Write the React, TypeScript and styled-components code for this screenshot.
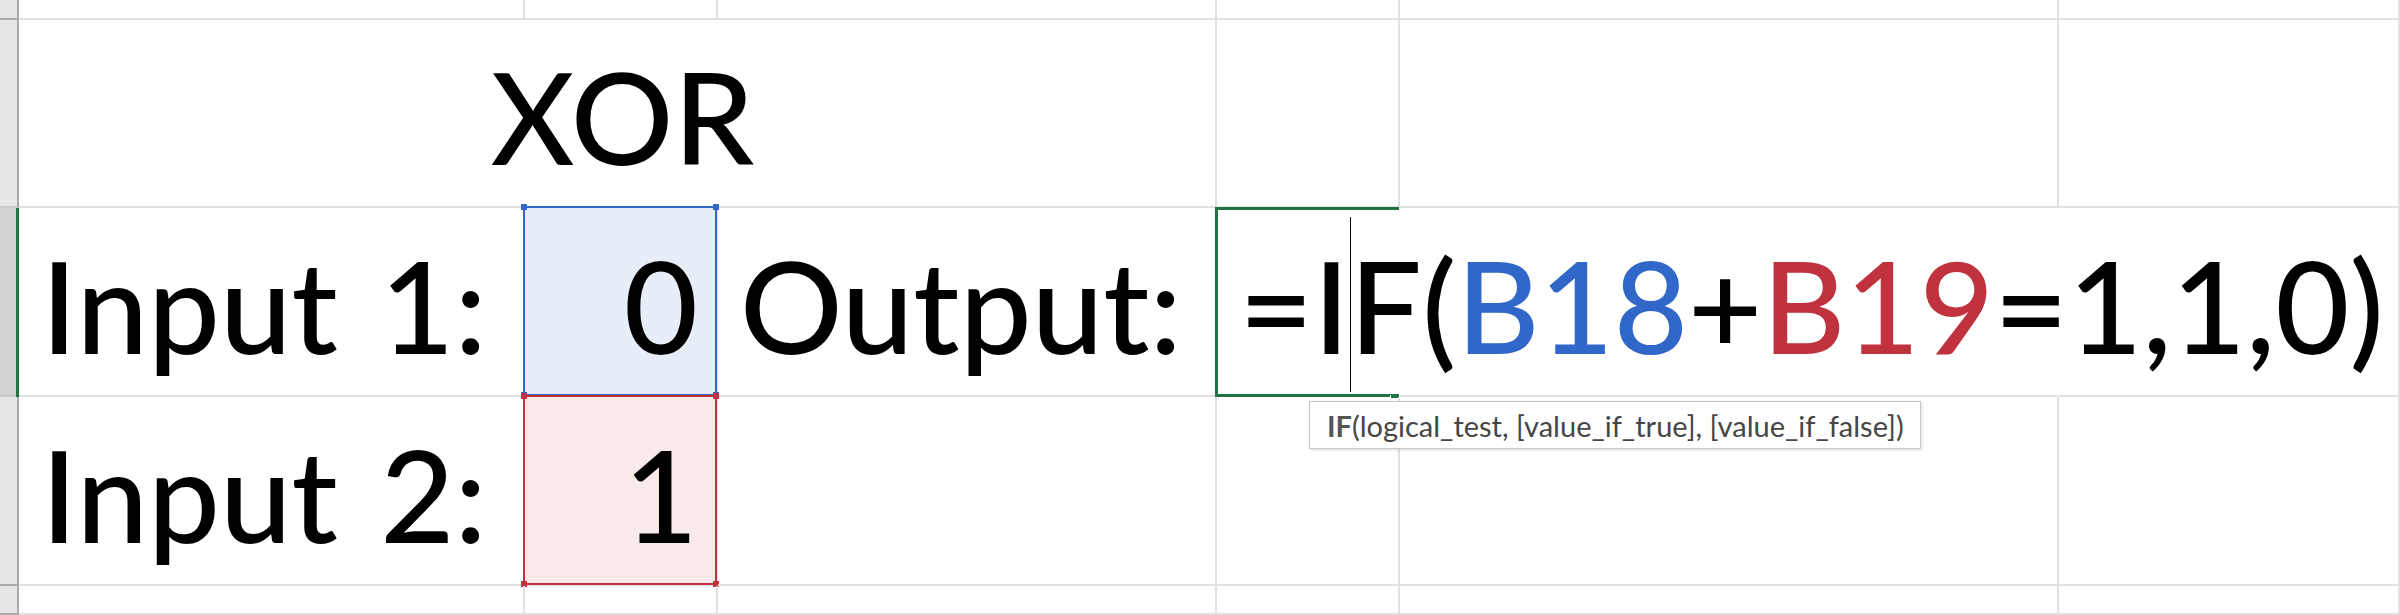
import React from 'react';
import styled, { createGlobalStyle } from 'styled-components';

const GlobalStyle = createGlobalStyle`
  html, body {
    margin: 0;
    padding: 0;
    background: #ffffff;
  }
  body {
    font-family: Lato, "Noto Sans", sans-serif;
    overflow: hidden;
  }
`;

const GRID = '#e1e1e1';
const HEAD = '#e6e6e6';
const HEAD_LINE = '#ababab';
const GREEN = '#217346';
const BLUE = '#3167c9';
const RED = '#c0323d';

type Align = 'left' | 'right' | 'center';

const Sheet = styled.div`
  display: grid;
  grid-template-columns: 19px 506px 193px 499px 183px 659px 1fr;
  grid-template-rows: 20px 188px 189px 189px 1fr;
  width: 2400px;
  height: 615px;
  overflow: hidden;
`;

const RowHead = styled.div<{ $active?: boolean; $soft?: boolean }>`
  position: relative;
  background: ${(p) => (p.$active ? '#d2d2d2' : HEAD)};
  border-right: 2px solid ${HEAD_LINE};
  border-bottom: 2px solid ${(p) => (p.$soft || p.$active ? '#cacaca' : HEAD_LINE)};

  &::after {
    content: '';
    display: ${(p) => (p.$active ? 'block' : 'none')};
    position: absolute;
    top: 0;
    bottom: -2px;
    right: -2px;
    width: 3px;
    background: ${GREEN};
  }
`;

const Cell = styled.div<{ $align?: Align; $open?: boolean; $fill?: string }>`
  position: relative;
  display: flex;
  align-items: flex-end;
  justify-content: ${(p) =>
    p.$align === 'right' ? 'flex-end' : p.$align === 'center' ? 'center' : 'flex-start'};
  min-width: 0;
  padding: 0 18px 13px 22px;
  background: ${(p) => p.$fill ?? 'transparent'};
  border-right: 2px solid ${(p) => (p.$open ? 'transparent' : GRID)};
  border-bottom: 2px solid ${GRID};
  font-size: 128px;
  font-weight: 500;
  line-height: 1.2;
  word-spacing: 10px;
  white-space: nowrap;
  color: #000000;
`;

const Highlight = styled.div<{ $color: string }>`
  position: absolute;
  top: -2px;
  left: -2px;
  right: -1px;
  bottom: -1px;
  border: 2px solid ${(p) => p.$color};
  pointer-events: none;
`;

const Handle = styled.span<{ $color: string; $x: 'left' | 'right'; $y: 'top' | 'bottom' }>`
  position: absolute;
  width: 6px;
  height: 6px;
  background: ${(p) => p.$color};
  ${(p) => p.$x}: -4px;
  ${(p) => p.$y}: -4px;
`;

const ActiveFrame = styled.div`
  position: absolute;
  top: -1px;
  left: -2px;
  right: -1px;
  bottom: -2px;
  border: 3px solid ${GREEN};
  border-right: none;
  pointer-events: none;
`;

const FillHandle = styled.span`
  position: absolute;
  right: -1px;
  bottom: -3px;
  width: 8px;
  height: 3px;
  background: ${GREEN};
  border-left: 1px solid #ffffff;
`;

const Formula = styled.span`
  position: relative;
`;

const Ref = styled.span<{ $color: string }>`
  color: ${(p) => p.$color};
`;

const Caret = styled.span`
  position: relative;
  display: inline-block;
  width: 0;

  &::after {
    content: '';
    position: absolute;
    left: 0;
    bottom: -38px;
    height: 175px;
    border-left: 1px solid #000000;
  }
`;

const Tip = styled.div`
  position: absolute;
  left: 92px;
  top: 193px;
  z-index: 3;
  box-sizing: border-box;
  width: 612px;
  height: 48px;
  display: flex;
  align-items: center;
  padding-left: 17px;
  background: #ffffff;
  border: 1px solid #c8c8c8;
  box-shadow: 1px 1px 3px rgba(0, 0, 0, 0.14);
  font-family: Lato, "Noto Sans", sans-serif;
  font-size: 29px;
  font-weight: 400;
  line-height: 1;
  word-spacing: normal;
  color: #464646;
  white-space: nowrap;

  b {
    font-weight: 700;
    color: #555555;
  }
`;

function Corners({ color }: { color: string }) {
  return (
    <>
      <Handle $color={color} $x="left" $y="top" />
      <Handle $color={color} $x="right" $y="top" />
      <Handle $color={color} $x="left" $y="bottom" />
      <Handle $color={color} $x="right" $y="bottom" />
    </>
  );
}

function EmptyCells({ count }: { count: number }) {
  return (
    <>
      {Array.from({ length: count }, (_, i) => (
        <Cell key={i} />
      ))}
    </>
  );
}

export default function App() {
  return (
    <>
      <GlobalStyle />
      <Sheet>
        {/* row 16 */}
        <RowHead />
        <EmptyCells count={6} />

        {/* row 17: title */}
        <RowHead $soft />
        <Cell $open />
        <Cell $open $align="center">XOR</Cell>
        <EmptyCells count={4} />

        {/* row 18: first input and the formula being edited */}
        <RowHead $active />
        <Cell>Input 1:</Cell>
        <Cell $align="right" $fill="#e8eef8">
          0
          <Highlight $color={BLUE}>
            <Corners color={BLUE} />
          </Highlight>
        </Cell>
        <Cell>Output:</Cell>
        <Cell $open>
          <Formula>
            =I<Caret />F(<Ref $color={BLUE}>B18</Ref>+<Ref $color={RED}>B19</Ref>=1,1,0)
          </Formula>
          <ActiveFrame />
          <FillHandle />
          <Tip>
            <span>
              <b>IF</b>(logical_test, [value_if_true], [value_if_false])
            </span>
          </Tip>
        </Cell>
        <Cell $open />
        <Cell />

        {/* row 19: second input */}
        <RowHead />
        <Cell>Input 2:</Cell>
        <Cell $align="right" $fill="#f9e9e9">
          1
          <Highlight $color={RED}>
            <Corners color={RED} />
          </Highlight>
        </Cell>
        <EmptyCells count={4} />

        {/* row 20 */}
        <RowHead />
        <EmptyCells count={6} />
      </Sheet>
    </>
  );
}
